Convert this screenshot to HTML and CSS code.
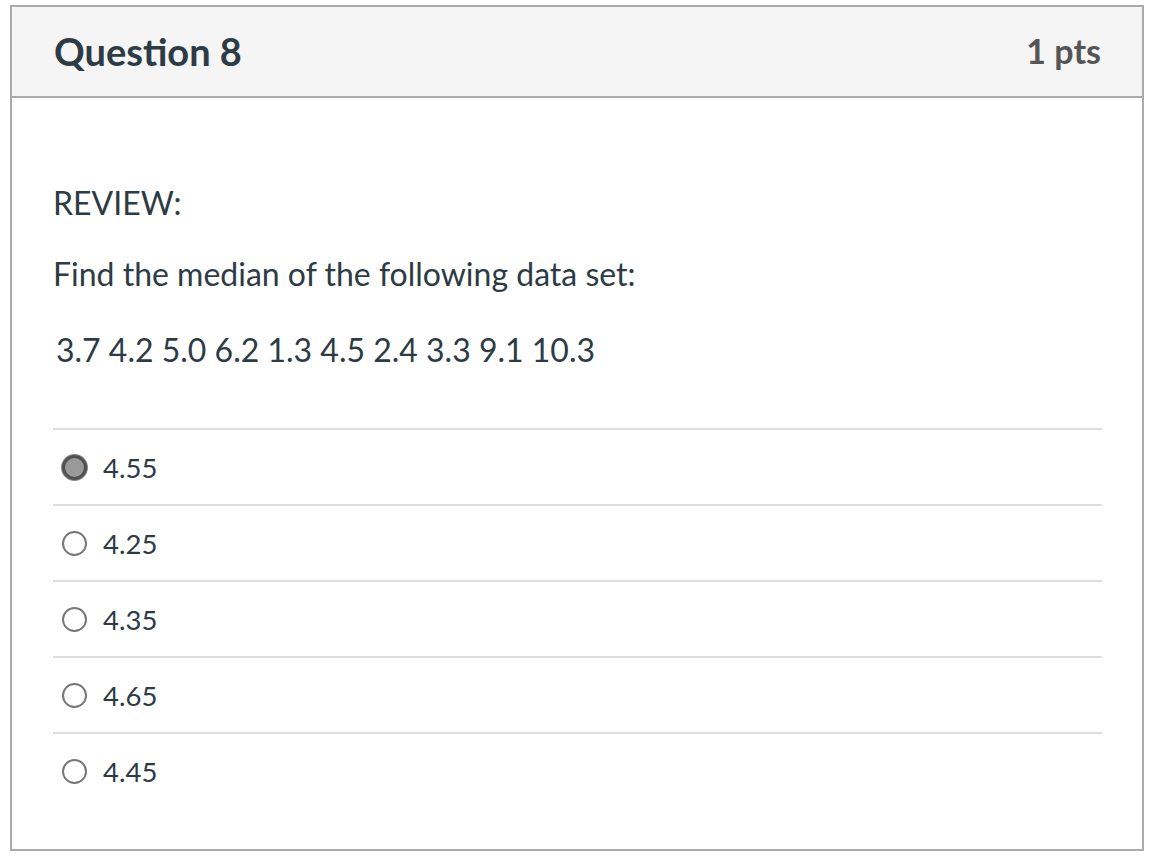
FILE: index.html
```html
<!DOCTYPE html>
<html>
<head>
<meta charset="utf-8">
<link rel="stylesheet" href="styles.css">
</head>
<body>
<div class="card">
  <div class="header">
    <h2 class="title">Question 8</h2>
    <span class="pts">1 pts</span>
  </div>
  <div class="body">
    <p class="text review">REVIEW:</p>
    <p class="text prompt">Find the median of the following data set:</p>
    <p class="text data">3.7 4.2 5.0 6.2 1.3 4.5 2.4 3.3 9.1 10.3</p>
    <div class="answers">
      <div class="answer"><span class="radio selected"></span><span class="label">4.55</span></div>
      <div class="answer"><span class="radio"></span><span class="label">4.25</span></div>
      <div class="answer"><span class="radio"></span><span class="label">4.35</span></div>
      <div class="answer"><span class="radio"></span><span class="label">4.65</span></div>
      <div class="answer"><span class="radio"></span><span class="label">4.45</span></div>
    </div>
  </div>
</div>
</body>
</html>
```

FILE: styles.css
```css
html, body {
  margin: 0;
  padding: 0;
  background: #fff;
}
body {
  font-family: Lato, "Liberation Sans", sans-serif;
  color: #2d3b45;
}
.card {
  margin: 5px 0 0 10px;
  width: 1134px;
  height: 846px;
  box-sizing: border-box;
  border: 2px solid #aaaaaa;
}
.header {
  height: 91px;
  box-sizing: border-box;
  background: #f5f5f5;
  border-bottom: 2px solid #aaaaaa;
  display: flex;
  align-items: center;
  justify-content: space-between;
  padding: 0 41px 2px 42px;
}
.title {
  margin: 0;
  font-size: 38px;
  font-weight: 700;
  color: #2d3b45;
}
.pts {
  font-size: 34px;
  font-weight: 700;
  color: #555555;
}
.body {
  padding: 81px 40px 0 41px;
}
.text {
  margin: 0;
  font-size: 32px;
  line-height: 48px;
}
.review {
  margin-bottom: 23px;
}
.prompt {
  margin-bottom: 28px;
}
.data {
  margin-left: 3px;
}
.answers {
  margin-top: 54px;
  border-top: 2px solid #dddddd;
}
.answer {
  height: 74px;
  border-bottom: 2px solid #dddddd;
  display: flex;
  align-items: center;
  padding-left: 9px;
}
.answer:last-child {
  border-bottom: none;
}
.radio {
  width: 21px;
  height: 21px;
  border: 2px solid #777777;
  border-radius: 50%;
  background: #fff;
  margin-right: 16px;
  flex: none;
}
.radio.selected {
  background: #999999;
  border: 3px solid #505050;
  width: 19px;
  height: 19px;
  box-shadow: 0 0 0 1px #8a8a8a;
}
.label {
  font-size: 27.5px;
}
```
